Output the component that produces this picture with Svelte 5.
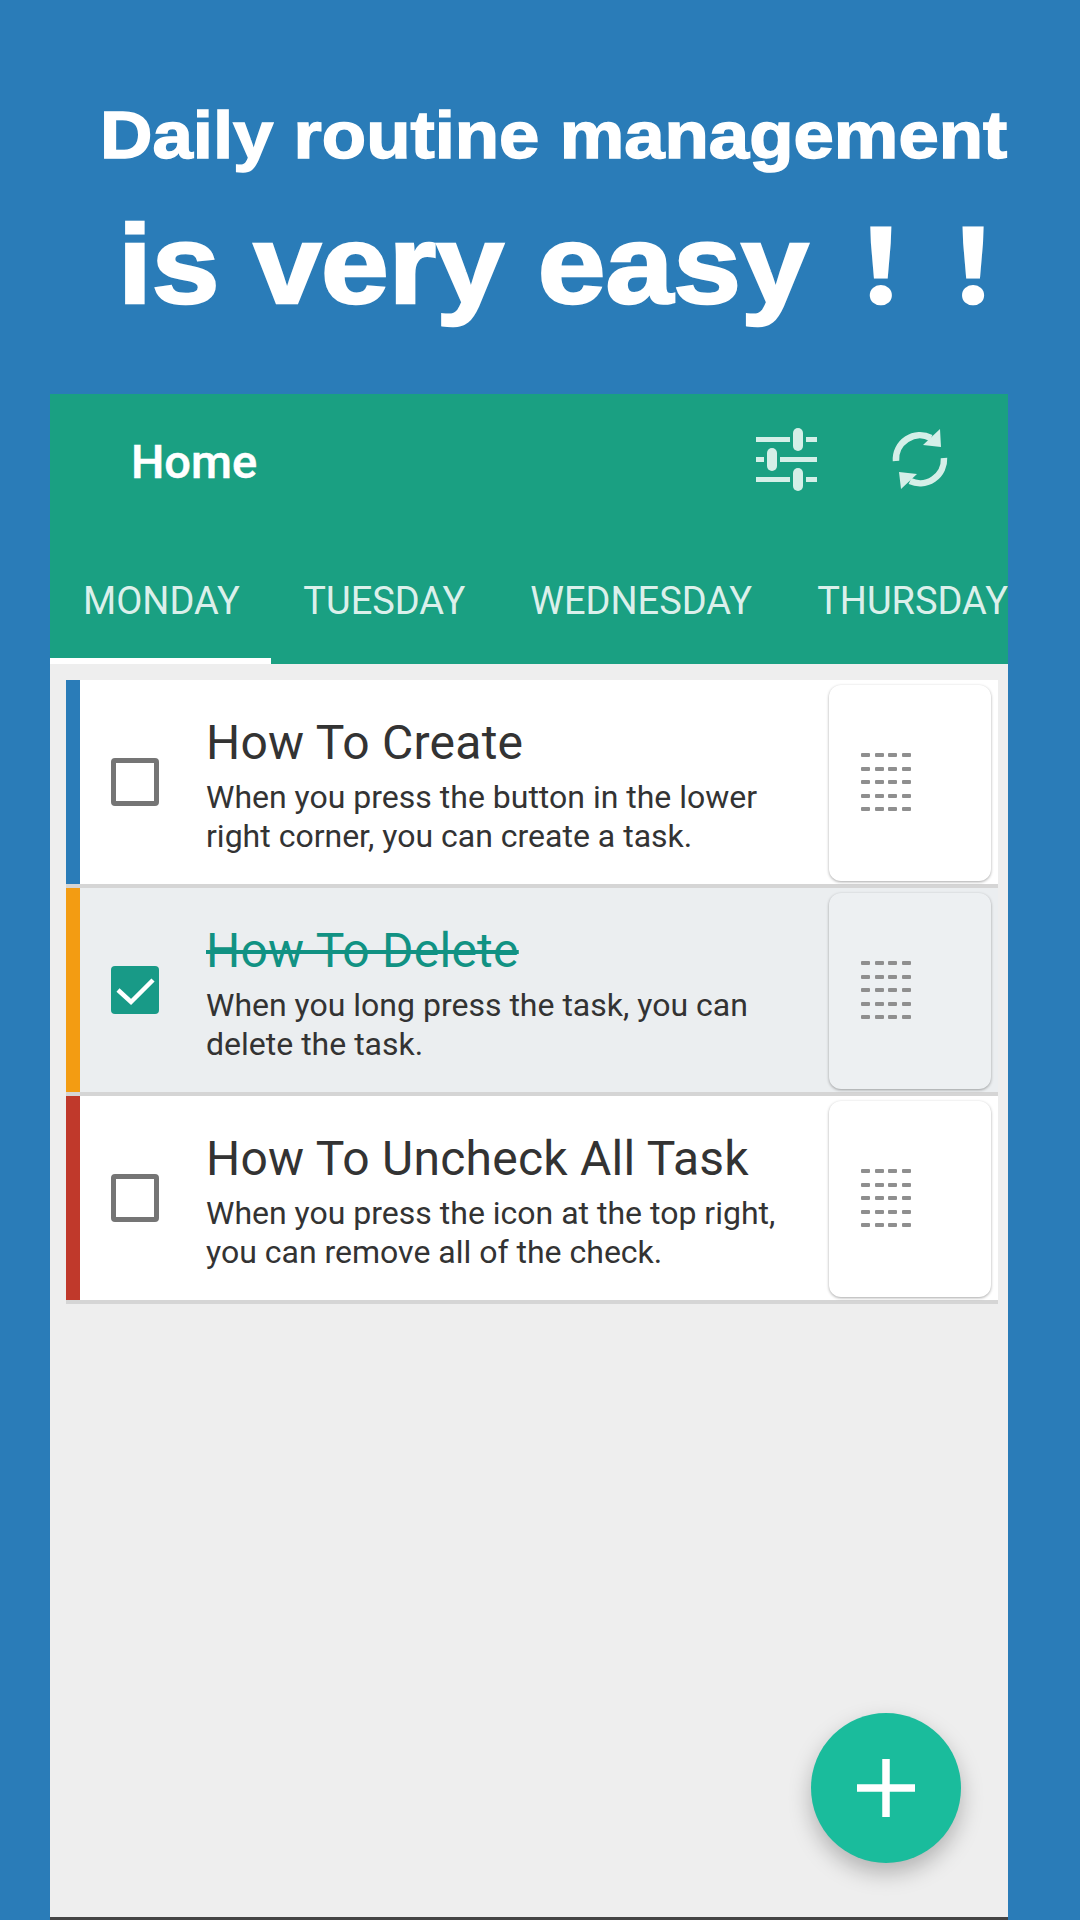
<script>
  const tabs = ['MONDAY', 'TUESDAY', 'WEDNESDAY', 'THURSDAY'];

  const tasks = [
    { title: 'How To Create', lines: ['When you press the button in the lower', 'right corner, you can create a task.'], color: '#2a7cb8', done: false },
    { title: 'How To Delete', lines: ['When you long press the task, you can', 'delete the task.'], color: '#f39c12', done: true },
    { title: 'How To Uncheck All Task', lines: ['When you press the icon at the top right,', 'you can remove all of the check.'], color: '#c0392b', done: false },
  ];

  const grip = Array(20).fill(0);
</script>

<div class="page">
  <div class="headline">
    <div class="line1">Daily routine management</div>
    <div class="line2">is very easy <span class="marks">！！</span></div>
  </div>

  <div class="phone">
    <header class="appbar">
      <div class="toolbar">
        <span class="home">Home</span>
        <div class="actions">
          <svg class="ic-sliders" width="65" height="67" viewBox="0 0 65 67" fill="none" stroke="#d5efe8" stroke-width="5" aria-hidden="true">
            <path d="M2 13.5H36M52 13.5H63M2 33.5H10M26 33.5H63M2 53.5H36M52 53.5H63" />
            <rect x="39" y="2" width="10" height="23" rx="5" fill="#d5efe8" stroke="none" />
            <rect x="13" y="22" width="10" height="23" rx="5" fill="#d5efe8" stroke="none" />
            <rect x="39" y="42" width="10" height="23" rx="5" fill="#d5efe8" stroke="none" />
          </svg>
          <svg class="ic-refresh" width="62" height="67" viewBox="0 0 62 67" fill="none" aria-hidden="true">
            <path d="M7 35A24 24 0 0 1 42 12M55 32A24 24 0 0 1 21 55" stroke="#d5efe8" stroke-width="6.5" />
            <path d="M51 3L52 21L34 19ZM12 63L10 46L28 48Z" fill="#d5efe8" />
          </svg>
        </div>
      </div>
      <nav class="tabs">
        {#each tabs as tab, i}
          <span class="tab" class:active={i === 0}>{tab}</span>
        {/each}
      </nav>
    </header>

    <main class="list">
      {#each tasks as task}
        <div class="row" class:done={task.done}>
          <span class="bar" style="background-color: {task.color}"></span>
          <div class="check">
            {#if task.done}
              <svg width="48" height="48" viewBox="0 0 48 48" aria-hidden="true">
                <rect width="48" height="48" rx="4" fill="#189a87" />
                <path d="M7 24L20 36L42 14" fill="none" stroke="#fff" stroke-width="4.5" />
              </svg>
            {:else}
              <span class="box"></span>
            {/if}
          </div>
          <div class="text">
            <div class="title">{task.title}</div>
            {#each task.lines as line}
              <div class="desc">{line}</div>
            {/each}
          </div>
          <div class="handle">
            <div class="grip">
              {#each grip as _}
                <span></span>
              {/each}
            </div>
          </div>
        </div>
      {/each}
    </main>

    <button class="fab" aria-label="Add task">
      <svg width="58" height="58" viewBox="0 0 58 58" aria-hidden="true">
        <path d="M29 0V58M0 29H58" stroke="#fff" stroke-width="7.5" />
      </svg>
    </button>
  </div>
</div>

<style>
  :global(body) {
    margin: 0;
    background: #2a7cb8;
  }
  .page {
    width: 1080px;
    height: 1920px;
    display: flex;
    flex-direction: column;
    overflow: hidden;
    font-family: Roboto, sans-serif;
  }
  .headline {
    height: 394px;
    box-sizing: border-box;
    padding-top: 96px;
    color: #fff;
    font-family: "Liberation Sans", "Noto Sans CJK JP", sans-serif;
    font-weight: 700;
    white-space: nowrap;
    -webkit-text-stroke: 1.5px #fff;
  }
  .line1 {
    font-size: 67px;
    line-height: 78px;
    margin-left: 100px;
    transform: scaleX(1.083);
    transform-origin: left center;
  }
  .line2 {
    font-size: 111px;
    line-height: 128px;
    margin-left: 118px;
    margin-top: 27px;
    transform: scaleX(1.097);
    transform-origin: left center;
    -webkit-text-stroke: 2.5px #fff;
  }
  .marks {
    font-size: 100px;
    letter-spacing: -16px;
    margin-left: -15px;
  }
  .phone {
    position: relative;
    width: 958px;
    height: 1526px;
    margin-left: 50px;
    background: #eeeeee;
    border-bottom: 3px solid #444;
    box-sizing: border-box;
    overflow: hidden;
  }
  .appbar {
    height: 270px;
    background: #1aa082;
    display: flex;
    flex-direction: column;
    justify-content: space-between;
  }
  .toolbar {
    display: flex;
    align-items: center;
    justify-content: space-between;
    height: 130px;
    padding: 0 57px 0 81px;
  }
  .home {
    color: #fff;
    font-size: 47px;
    font-weight: 500;
    padding-top: 4px;
    -webkit-text-stroke: 0.5px #fff;
  }
  .actions {
    display: flex;
    align-items: center;
    gap: 70px;
  }
  .tabs {
    display: flex;
    white-space: nowrap;
  }
  .tab {
    box-sizing: border-box;
    padding: 0 32.5px 43px;
    height: 83px;
    line-height: 40px;
    font-size: 38px;
    color: rgba(255, 255, 255, 0.86);
  }
  .tab.active {
    border-bottom: 6px solid #fff;
    padding: 0 31px 37px 33px;
  }
  .list {
    padding: 16px 10px 0 16px;
    display: flex;
    flex-direction: column;
  }
  .row {
    display: flex;
    align-items: stretch;
    height: 208px;
    box-sizing: border-box;
    background: #fff;
    border-bottom: 4px solid #d5d5d5;
    position: relative;
  }
  .row.done {
    background: #ebeef0;
  }
  .bar {
    width: 14px;
    flex: none;
  }
  .check {
    width: 126px;
    flex: none;
    display: flex;
    align-items: center;
    justify-content: center;
    padding-right: 16px;
    box-sizing: border-box;
  }
  .box {
    width: 48px;
    height: 48px;
    box-sizing: border-box;
    border: 5px solid #757575;
    border-radius: 4px;
  }
  .text {
    flex: 1;
    padding-top: 35px;
    color: #333;
    white-space: nowrap;
  }
  .title {
    font-size: 48px;
    line-height: 56px;
    letter-spacing: 0.25px;
    margin-bottom: 7px;
  }
  .row.done .title {
    color: #119283;
    text-decoration: line-through;
  }
  .desc {
    font-size: 32px;
    line-height: 39px;
  }
  .handle {
    flex: none;
    width: 162px;
    height: 196px;
    margin: 5px 7px 0 0;
    box-sizing: border-box;
    border-radius: 12px;
    background: #fff;
    box-shadow: 0 1px 3px rgba(0, 0, 0, 0.35);
    padding: 68px 0 0 32px;
  }
  .row.done .handle {
    background: #edf0f2;
  }
  .grip {
    display: grid;
    grid-template-columns: repeat(4, 9px);
    grid-auto-rows: 4px;
    column-gap: 4.5px;
    row-gap: 9.5px;
  }
  .grip span {
    background: #8f8f8f;
    border-radius: 1px;
  }
  .fab {
    position: absolute;
    left: 761px;
    top: 1319px;
    width: 150px;
    height: 150px;
    padding: 0;
    border: none;
    border-radius: 50%;
    background: #1abc9c;
    box-shadow: 0 10px 22px rgba(0, 0, 0, 0.25);
    display: flex;
    align-items: center;
    justify-content: center;
  }
</style>
